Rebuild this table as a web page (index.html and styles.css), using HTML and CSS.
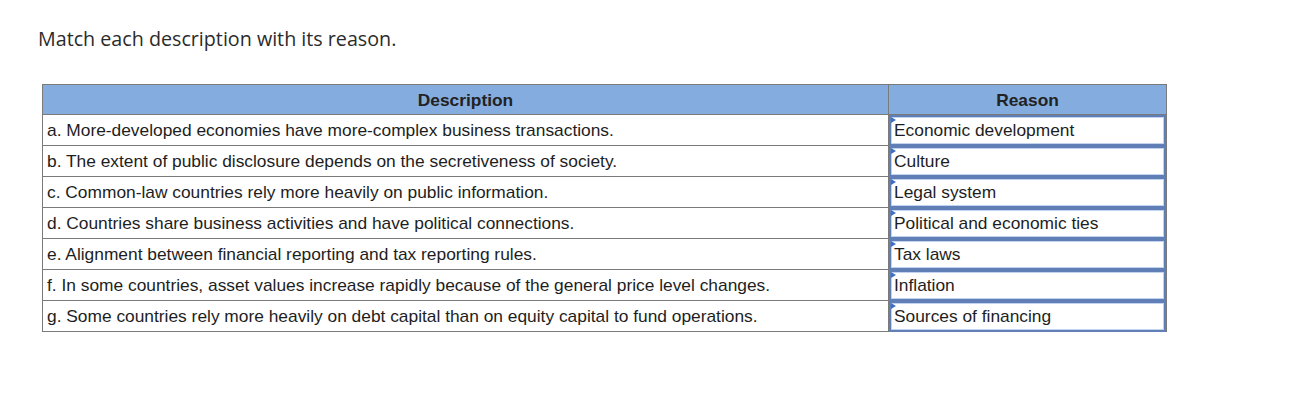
FILE: index.html
```html
<!DOCTYPE html>
<html>
<head>
<meta charset="utf-8">
<link rel="stylesheet" href="styles.css">
</head>
<body>
<div class="page">
  <p class="prompt">Match each description with its reason.</p>
  <table class="match">
    <thead>
      <tr><th class="desc">Description</th><th class="reason">Reason</th></tr>
    </thead>
    <tbody>
      <tr><td class="desc">a. More-developed economies have more-complex business transactions.</td><td class="reason"><div class="pick"><span class="flag"></span>Economic development</div></td></tr>
      <tr><td class="desc">b. The extent of public disclosure depends on the secretiveness of society.</td><td class="reason"><div class="pick"><span class="flag"></span>Culture</div></td></tr>
      <tr><td class="desc">c. Common-law countries rely more heavily on public information.</td><td class="reason"><div class="pick"><span class="flag"></span>Legal system</div></td></tr>
      <tr><td class="desc">d. Countries share business activities and have political connections.</td><td class="reason"><div class="pick"><span class="flag"></span>Political and economic ties</div></td></tr>
      <tr><td class="desc">e. Alignment between financial reporting and tax reporting rules.</td><td class="reason"><div class="pick"><span class="flag"></span>Tax laws</div></td></tr>
      <tr><td class="desc">f. In some countries, asset values increase rapidly because of the general price level changes.</td><td class="reason"><div class="pick"><span class="flag"></span>Inflation</div></td></tr>
      <tr><td class="desc">g. Some countries rely more heavily on debt capital than on equity capital to fund operations.</td><td class="reason"><div class="pick"><span class="flag"></span>Sources of financing</div></td></tr>
    </tbody>
  </table>
</div>
</body>
</html>
```
FILE: styles.css
```css
html, body { margin: 0; padding: 0; background: #fff; }
.page { padding: 26px 0 0 38px; }
.prompt {
  margin: 0 0 32px 0;
  font-family: "Open Sans", "Lato", sans-serif;
  font-size: 19.7px;
  line-height: 26px;
  color: #2b2b2b;
}
.match {
  margin-left: 4px;
  border-collapse: collapse;
  font-family: "Liberation Sans", Arial, sans-serif;
  font-size: 17.35px;
  color: #1e1e1e;
  border: 1px solid #7a7a7a;
}
.match th {
  background: #84acdf;
  font-weight: bold;
  height: 29px;
  padding: 0;
  text-align: center;
  border: 1px solid #7a7a7a;
  color: #222;
  line-height: 20px;
}
.match td {
  height: 30px;
  padding: 0;
  border: 1px solid #7a7a7a;
  line-height: 20px;
}
.match .desc { width: 845px; }
.match td.desc { padding-left: 4px; width: 841px; }
.match .reason { width: 277px; }
.pick {
  position: relative;
  box-sizing: border-box;
  height: 31px;
  margin: -1px 0;
  border: 2px solid #5f7fb6;
  box-shadow: inset 0 0 0 1px #c2d3ef;
  padding: 3px 0 0 3px;
  line-height: 20px;
  background: #fff;
  white-space: nowrap;
}
.flag {
  position: absolute;
  left: 0;
  top: 0;
  width: 0;
  height: 0;
  border-left: 5px solid #3f6fc5;
  border-top: 3px solid transparent;
  border-bottom: 3px solid transparent;
}
```
